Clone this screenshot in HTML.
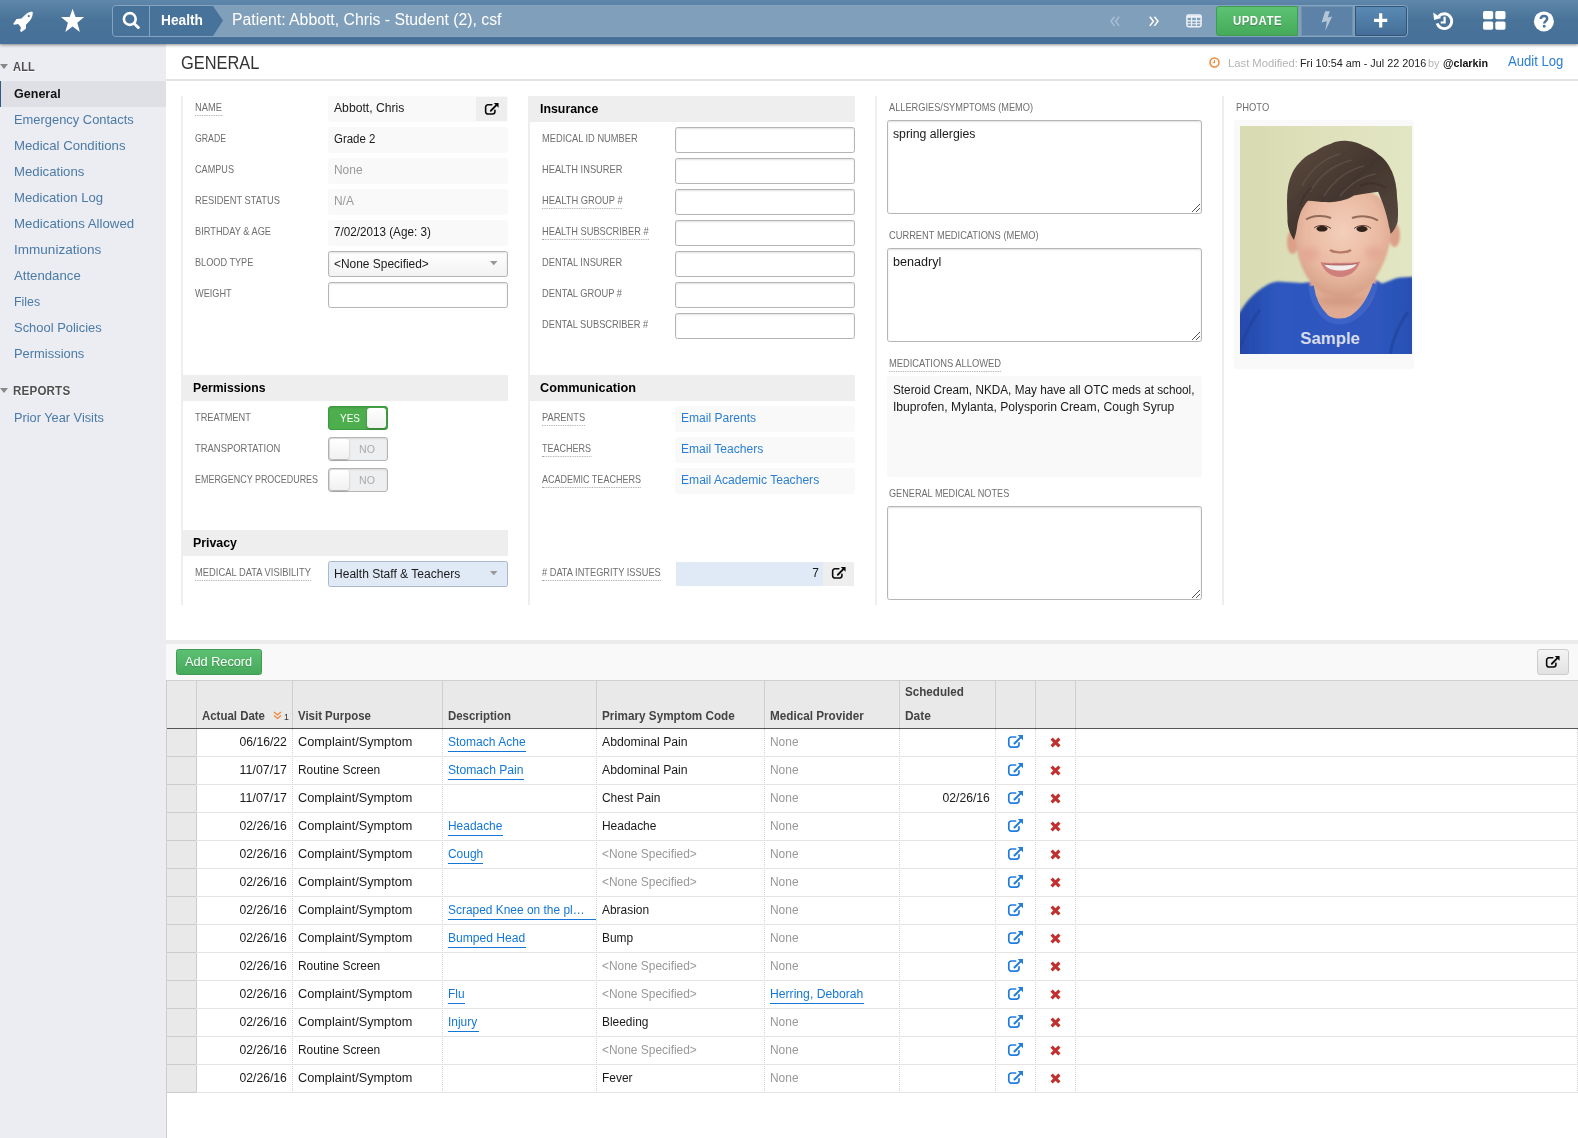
<!DOCTYPE html><html lang="en"><head><meta charset="utf-8"><title>Patient: Abbott, Chris</title><style>
*{box-sizing:border-box;margin:0;padding:0}
html,body{width:1578px;height:1138px;overflow:hidden;background:#fff}
body{position:relative;font-family:"Liberation Sans",sans-serif;color:#222;font-size:12.3px}
.a{position:absolute}
.t{position:absolute;white-space:nowrap;transform-origin:0 50%}
.t.r{transform-origin:100% 50%}
svg{position:absolute;overflow:visible}
#top{left:0;top:0;width:1578px;height:44px;background:linear-gradient(#5f87ab 0,#4a7399 45%,#47709a 100%);box-shadow:0 1px 3px rgba(0,0,0,.45);z-index:5}
#sbox{left:112px;top:5px;width:1296px;height:32px;border:1px solid #86a3bf;border-radius:4px;background:#809fbb;overflow:hidden}
#side{left:0;top:44px;width:166px;height:1094px;background:#ecedf3}
.sl{font-size:13.6px;color:#4a7aa5;line-height:20px;transform:scaleX(.95)}
.sh{font-size:12.2px;color:#505050;font-weight:bold;line-height:20px;transform:scaleX(.95);letter-spacing:.2px;text-shadow:0 1px 0 #fff}
.lbl{font-size:10.6px;color:#6f6f6f;line-height:14px;height:16px;transform:scaleX(.87)}
.lbl.u{border-bottom:1px dotted #a5a5a5}
.val{font-size:12.3px;color:#1a1a1a;line-height:20px;transform:scaleX(.97)}
.val.g{color:#999}
.val.k{color:#2a7fd4}
.box{position:absolute;background:#f9f9f9;border-radius:3px}
.inp{position:absolute;background:#fff;border:1px solid #b5b5b5;border-radius:2.500px;box-shadow:inset 0 1px 2px rgba(0,0,0,.12)}
.sec{position:absolute;background:#eee;height:26px}
.sect{font-size:13px;font-weight:bold;color:#000;line-height:20px;transform:scaleX(.95)}
.vl{position:absolute;width:2px;background:#eee;top:96px;height:508.700px}
.tog{position:absolute;width:60px;height:23.3px;border-radius:3px;border:1px solid #b4b4b4;background:#eeeff1;box-shadow:inset 0 1px 2px rgba(0,0,0,.1)}
.tog.on{background:#4cae4c;border-color:#3d9a3d}
.knob{position:absolute;top:.6px;width:19px;height:20px;margin:0 .6px;border-radius:3px;background:linear-gradient(#fff,#f1f1f1);box-shadow:0 1px 2px rgba(0,0,0,.3)}
.th{font-size:12.3px;font-weight:bold;color:#444;line-height:20px;transform:scaleX(.93)}
.td{font-size:12.3px;color:#1a1a1a;line-height:20px;transform:scaleX(.97)}
.td.g{color:#999}
.td.k{color:#1477d6}
.ul{position:absolute;height:1.3px;background:#1477d6}
.tb1{font-size:14px;font-weight:bold;color:#fff;line-height:20px;transform:scaleX(.92)}
.tb2{font-size:16px;color:#fff;line-height:20px;transform:scaleX(.93)}
.upd{font-size:12px;font-weight:bold;color:#fff;line-height:20px;letter-spacing:.5px;text-shadow:0 1px 1px rgba(0,0,0,.25)}
.h1{font-size:18.5px;color:#333;line-height:30px;transform:scaleX(.9)}
.lm{font-size:11.4px;line-height:20px;transform:scaleX(.95)}
.al{font-size:13.8px;color:#2a7fd4;line-height:20px;transform:scaleX(.95)}
.tg{font-size:11.8px;line-height:20px;transform:scaleX(.9)}
.ar{font-size:13.4px;color:#fff;line-height:20px;transform:scaleX(.95);text-shadow:0 1px 1px rgba(0,0,0,.2)}
.hl{position:absolute;left:167px;width:1411px;height:1px;background:#e4e4e4}
.cv{position:absolute;top:729px;width:0;height:364px;border-left:1px dotted #d4d4d4}
.hv{position:absolute;top:681px;width:1px;height:47px;background:#cfcfcf}
</style></head><body>
<div class="a" id="top">
<svg style="left:0;top:0" width="44" height="44" viewBox="0 0 44 44"><path d="M32.700 11.900C30.500 11.700 28.500 12.300 26.800 13.500C24.800 14.900 23.100 16.900 21.500 18.500L16.500 19L13.100 23.900L14.300 24.800L18.200 24L20.900 27.200L20.100 31L21.300 32L25.900 28.800L26.100 24.400C28 22.800 29.800 21 31 19C32.200 17 32.900 14.600 32.700 11.900z" fill="#fff"/><circle cx="28.800" cy="16.100" r="1.100" fill="#47729a"/></svg>
<svg style="left:0;top:0" width="100" height="44" viewBox="0 0 100 44"><path d="M72.600 8.700L75.500 17H84.200L77.300 22.700L79.900 32L72.600 26.400L65.300 32L67.900 22.700L61 17H69.700z" fill="#fff"/></svg>
<div class="a" id="sbox">
<div class="a" style="left:0;top:0;width:36px;height:30px;background:#47729a"></div>
<div class="a" style="left:36px;top:0;width:1px;height:30px;background:#86a3bf"></div>
<div class="a" style="left:37px;top:0;width:63px;height:30px;background:#47729a"></div>
<svg style="left:100px;top:0" width="11" height="30" viewBox="0 0 11 30"><path d="M0 0L10 14.500L0 30z" fill="#47729a"/></svg>
<svg style="left:0;top:0" width="36" height="30" viewBox="0 0 36 30"><circle cx="16.800" cy="13" r="5.900" fill="none" stroke="#fff" stroke-width="2.600"/><path d="M21.300 17.800l4.100 3.800" stroke="#fff" stroke-width="2.800" stroke-linecap="round"/></svg>
</div>
<span class="t tb1" style="left:160.5px;top:9.9px;;transform:scaleX(0.981)">Health</span>
<span class="t tb2" style="left:231.5px;top:10px;;transform:scaleX(0.987)">Patient: Abbott, Chris - Student (2), csf</span>
<svg style="left:1110px;top:16px" width="10" height="11" viewBox="0 0 10 11"><path d="M4.600 .7L1 5.300 4.600 9.900M9.200 .7L5.600 5.300 9.200 9.900" fill="none" stroke="#a9bfd3" stroke-width="1.500"/></svg>
<svg style="left:1149px;top:16px" width="10" height="11" viewBox="0 0 10 11"><path d="M.8 .7L4.400 5.300 .8 9.900M5.400 .7L9 5.300 5.400 9.900" fill="none" stroke="#fff" stroke-width="1.500"/></svg>
<svg style="left:1186px;top:13.500px" width="16" height="14" viewBox="0 0 16 14"><rect x=".9" y=".9" width="14.200" height="11.800" rx="1.600" fill="none" stroke="#eef2f6" stroke-width="1.500"/><path d="M1 1.500h14v2.300H1z" fill="#eef2f6"/><path d="M1 6.900h14M1 9.800h14M5.600 3v10M10.400 3v10" stroke="#eef2f6" stroke-width="1.100"/></svg>
<div class="a" style="left:1216px;top:6px;width:82px;height:30px;border-radius:3px 0 0 3px;background:linear-gradient(#5ec274,#45aa5a);border:1px solid #3f9a52"></div>
<span class="t upd" style="left:1232.5px;top:10.6px;;transform:scaleX(0.952)">UPDATE</span>
<div class="a" style="left:1301px;top:6px;width:52px;height:30px;background:#5c83a7;border:1px solid #7092b2"></div>
<svg style="left:1321px;top:11px" width="12" height="20" viewBox="0 0 12 20"><path d="M4.200 .3h4.600L6.700 6.600l4.500-1.100L4.300 19.700l1.500-9.400L.6 11.600z" fill="#b4c6d8"/></svg>
<div class="a" style="left:1355px;top:6px;width:52px;height:30px;border-radius:0 3px 3px 0;background:linear-gradient(#5a8ab4,#446e97);border:1px solid #31557a"></div>
<svg style="left:1373px;top:13px" width="15" height="15" viewBox="0 0 15 15"><path d="M7.700 .2v14.200M1 7.300h13.300" stroke="#fff" stroke-width="3.200"/></svg>
<svg style="left:1433px;top:11px" width="22" height="22" viewBox="0 0 22 22"><path d="M5.700 5.300A7.400 7.400 0 1 1 4.200 12.300" fill="none" stroke="#fff" stroke-width="2.900"/><path d="M.2 1.400l.9 7.700 7.100-2.200z" fill="#fff"/><path d="M11.600 5.800v5.700H7.700" fill="none" stroke="#fff" stroke-width="2.200"/></svg>
<svg style="left:1482.500px;top:11.300px" width="23" height="19" viewBox="0 0 23 19"><rect x="0" y="0" width="10.200" height="8.300" rx="1.700" fill="#fff"/><rect x="12.300" y="0" width="10.200" height="8.300" rx="1.700" fill="#fff"/><rect x="0" y="10.500" width="10.200" height="8.300" rx="1.700" fill="#fff"/><rect x="12.300" y="10.500" width="10.200" height="8.300" rx="1.700" fill="#fff"/></svg>
<svg style="left:1533px;top:11px" width="22" height="22" viewBox="0 0 22 22"><circle cx="10.900" cy="10.400" r="10" fill="#fff"/><path d="M7.700 8c.2-2 1.500-3.100 3.300-3.100 1.900 0 3.200 1.100 3.200 2.700 0 2.400-3 2.600-3 4.900" fill="none" stroke="#47729a" stroke-width="2.500"/><rect x="9.900" y="13.900" width="2.600" height="2.600" fill="#47729a"/></svg>
</div>
<div class="a" id="side"></div>
<div class="a" style="left:0;top:81px;width:166px;height:26px;background:#dfe0e6"></div>
<div class="a" style="left:0;top:81px;width:1px;height:26px;background:#2e5a88"></div>
<svg style="left:0;top:64px" width="8" height="5" viewBox="0 0 8 5"><path d="M0 0h8L4 5z" fill="#888"/></svg>
<span class="t sh" style="left:13px;top:56.5px;;transform:scaleX(0.905)">ALL</span>
<span class="t sl" style="left:14px;top:83.5px;color:#111;font-weight:bold;transform:scaleX(.9);transform:scaleX(0.922)">General</span>
<span class="t sl" style="left:14px;top:109.5px;;transform:scaleX(0.949)">Emergency Contacts</span>
<span class="t sl" style="left:14px;top:135.5px;;transform:scaleX(0.971)">Medical Conditions</span>
<span class="t sl" style="left:14px;top:161.5px;;transform:scaleX(0.970)">Medications</span>
<span class="t sl" style="left:14px;top:187.5px;;transform:scaleX(0.966)">Medication Log</span>
<span class="t sl" style="left:14px;top:213.5px;;transform:scaleX(0.976)">Medications Allowed</span>
<span class="t sl" style="left:14px;top:239.5px;;transform:scaleX(0.996)">Immunizations</span>
<span class="t sl" style="left:14px;top:265.5px;;transform:scaleX(0.970)">Attendance</span>
<span class="t sl" style="left:14px;top:291.5px;;transform:scaleX(0.909)">Files</span>
<span class="t sl" style="left:14px;top:317.5px;;transform:scaleX(0.952)">School Policies</span>
<span class="t sl" style="left:14px;top:343.5px;;transform:scaleX(0.950)">Permissions</span>
<svg style="left:0;top:388px" width="8" height="5" viewBox="0 0 8 5"><path d="M0 0h8L4 5z" fill="#888"/></svg>
<span class="t sh" style="left:13px;top:380.5px;">REPORTS</span>
<span class="t sl" style="left:14px;top:407.5px;;transform:scaleX(0.939)">Prior Year Visits</span>
<span class="t h1" style="left:181px;top:47.5px;;transform:scaleX(0.886)">GENERAL</span>
<div class="a" style="left:166px;top:79px;width:1412px;height:2px;background:#e2e2e2"></div>
<svg style="left:1209px;top:57px" width="11" height="11" viewBox="0 0 11 11"><circle cx="5.500" cy="5.500" r="4.500" fill="none" stroke="#f0883a" stroke-width="1.500"/><path d="M5.500 3v2.800H3.600" fill="none" stroke="#f0883a" stroke-width="1.100"/></svg>
<span class="t lm" style="left:1228px;top:53px;color:#b4b4b4;transform:scaleX(0.987)">Last Modified:</span>
<span class="t lm" style="left:1300px;top:53px;color:#222">Fri 10:54 am - Jul 22 2016</span>
<span class="t lm" style="left:1428px;top:53px;color:#b4b4b4">by</span>
<span class="t lm" style="left:1443px;top:53px;color:#111;font-weight:bold;transform:scaleX(.9);transform:scaleX(0.941)">@clarkin</span>
<span class="t al" style="left:1508px;top:52px;">Audit Log</span>
<div class="vl" style="left:181px"></div>
<div class="vl" style="left:528px"></div>
<div class="vl" style="left:875px"></div>
<div class="vl" style="left:1222px"></div>
<span class="t lbl u" style="left:195px;top:100px;;transform:scaleX(0.879)">NAME</span>
<div class="box" style="left:328px;top:96px;width:180px;height:26px"></div>
<span class="t val " style="left:334px;top:98.2px;;transform:scaleX(0.990)">Abbott, Chris</span>
<span class="t lbl" style="left:195px;top:131px;;transform:scaleX(0.825)">GRADE</span>
<div class="box" style="left:328px;top:127px;width:180px;height:26px"></div>
<span class="t val " style="left:334px;top:129.2px;;transform:scaleX(0.932)">Grade 2</span>
<span class="t lbl" style="left:195px;top:162px;;transform:scaleX(0.860)">CAMPUS</span>
<div class="box" style="left:328px;top:158px;width:180px;height:26px"></div>
<span class="t val g" style="left:334px;top:160.2px;">None</span>
<span class="t lbl" style="left:195px;top:193px;;transform:scaleX(0.880)">RESIDENT STATUS</span>
<div class="box" style="left:328px;top:189px;width:180px;height:26px"></div>
<span class="t val g" style="left:334px;top:191.2px;">N/A</span>
<span class="t lbl" style="left:195px;top:224px;;transform:scaleX(0.872)">BIRTHDAY &amp; AGE</span>
<div class="box" style="left:328px;top:220px;width:180px;height:26px"></div>
<span class="t val " style="left:334px;top:222.2px;;transform:scaleX(0.950)">7/02/2013 (Age: 3)</span>
<div class="a" style="left:476px;top:97px;width:31px;height:24px;background:#eee"></div>
<svg style="left:483.8px;top:103px" width="14.742" height="12.012" viewBox="0 0 16.2 13.2"><path d="M8.600 2H4.300A2.500 2.500 0 0 0 1.800 4.500V9.600A2.500 2.500 0 0 0 4.300 12.100H9.500A2.500 2.500 0 0 0 12 9.600V7.900" fill="none" stroke="#0a0a0a" stroke-width="1.75" stroke-linecap="round"/><path d="M7.500 8.500L13.600 2.400" fill="none" stroke="#0a0a0a" stroke-width="2.05" stroke-linecap="round"/><path d="M10.700 0H16V5.300z" fill="#0a0a0a"/></svg>
<span class="t lbl" style="left:195px;top:255px;;transform:scaleX(0.864)">BLOOD TYPE</span>
<div class="inp" style="left:328px;top:251px;width:180px;height:26px;background:linear-gradient(#fff,#f3f3f3)"></div>
<span class="t val" style="left:334px;top:254px;">&lt;None Specified&gt;</span>
<svg style="left:490px;top:261.300px" width="7.500" height="4.400" viewBox="0 0 9 5"><path d="M0 0h9L4.500 5z" fill="#999"/></svg>
<span class="t lbl" style="left:195px;top:286px;;transform:scaleX(0.866)">WEIGHT</span>
<div class="inp" style="left:328px;top:282px;width:180px;height:26px"></div>
<div class="sec" style="left:182px;top:375px;width:326px"></div>
<span class="t sect" style="left:193px;top:378px;;transform:scaleX(0.938)">Permissions</span>
<span class="t lbl" style="left:195px;top:410px;;transform:scaleX(0.873)">TREATMENT</span>
<div class="tog on" style="left:328px;top:406.3px"><div class="knob" style="right:0"></div></div>
<span class="t tg" style="left:339.5px;top:407.8px;color:#fff;transform:scaleX(0.847)">YES</span>
<span class="t lbl" style="left:195px;top:441px;;transform:scaleX(0.890)">TRANSPORTATION</span>
<div class="tog" style="left:328px;top:437.3px"><div class="knob" style="left:0"></div></div>
<span class="t tg" style="left:359.4px;top:439px;color:#aaa">NO</span>
<span class="t lbl" style="left:195px;top:472px;;transform:scaleX(0.844)">EMERGENCY PROCEDURES</span>
<div class="tog" style="left:328px;top:468.3px"><div class="knob" style="left:0"></div></div>
<span class="t tg" style="left:359.4px;top:470px;color:#aaa">NO</span>
<div class="sec" style="left:182px;top:530px;width:326px"></div>
<span class="t sect" style="left:193px;top:533px;">Privacy</span>
<span class="t lbl u" style="left:195px;top:565px;;transform:scaleX(0.884)">MEDICAL DATA VISIBILITY</span>
<div class="inp" style="left:328px;top:561px;width:180px;height:26px;background:#dfeaf6;border-color:#a9b9c9;box-shadow:none"></div>
<span class="t val" style="left:334px;top:564px;;transform:scaleX(0.980)">Health Staff &amp; Teachers</span>
<svg style="left:490px;top:571.300px" width="7.500" height="4.400" viewBox="0 0 9 5"><path d="M0 0h9L4.500 5z" fill="#999"/></svg>
<div class="sec" style="left:528px;top:96px;width:327px"></div>
<span class="t sect" style="left:540px;top:99px;">Insurance</span>
<span class="t lbl" style="left:542px;top:131px;;transform:scaleX(0.877)">MEDICAL ID NUMBER</span>
<div class="inp" style="left:675px;top:127px;width:180px;height:26px"></div>
<span class="t lbl" style="left:542px;top:162px;;transform:scaleX(0.878)">HEALTH INSURER</span>
<div class="inp" style="left:675px;top:158px;width:180px;height:26px"></div>
<span class="t lbl u" style="left:542px;top:193px;;transform:scaleX(0.882)">HEALTH GROUP #</span>
<div class="inp" style="left:675px;top:189px;width:180px;height:26px"></div>
<span class="t lbl u" style="left:542px;top:224px;;transform:scaleX(0.876)">HEALTH SUBSCRIBER #</span>
<div class="inp" style="left:675px;top:220px;width:180px;height:26px"></div>
<span class="t lbl" style="left:542px;top:255px;;transform:scaleX(0.880)">DENTAL INSURER</span>
<div class="inp" style="left:675px;top:251px;width:180px;height:26px"></div>
<span class="t lbl" style="left:542px;top:286px;;transform:scaleX(0.879)">DENTAL GROUP #</span>
<div class="inp" style="left:675px;top:282px;width:180px;height:26px"></div>
<span class="t lbl" style="left:542px;top:317px;;transform:scaleX(0.875)">DENTAL SUBSCRIBER #</span>
<div class="inp" style="left:675px;top:313px;width:180px;height:26px"></div>
<div class="sec" style="left:528px;top:375px;width:327px"></div>
<span class="t sect" style="left:540px;top:378px;;transform:scaleX(0.977)">Communication</span>
<span class="t lbl u" style="left:542px;top:410px;;transform:scaleX(0.875)">PARENTS</span>
<div class="box" style="left:675px;top:406px;width:180px;height:26px"></div>
<span class="t val k" style="left:681px;top:407.6px;;transform:scaleX(0.980)">Email Parents</span>
<span class="t lbl u" style="left:542px;top:441px;;transform:scaleX(0.851)">TEACHERS</span>
<div class="box" style="left:675px;top:437px;width:180px;height:26px"></div>
<span class="t val k" style="left:681px;top:438.6px;;transform:scaleX(0.982)">Email Teachers</span>
<span class="t lbl u" style="left:542px;top:472px;;transform:scaleX(0.850)">ACADEMIC TEACHERS</span>
<div class="box" style="left:675px;top:468px;width:180px;height:26px"></div>
<span class="t val k" style="left:681px;top:469.6px;;transform:scaleX(0.983)">Email Academic Teachers</span>
<span class="t lbl u" style="left:542px;top:565px;;transform:scaleX(0.873)"># DATA INTEGRITY ISSUES</span>
<div class="a" style="left:676px;top:562px;width:147px;height:24px;background:#dfeaf6"></div>
<div class="a" style="left:823px;top:562px;width:31px;height:24px;background:#eee"></div>
<span class="t r val" style="right:759px;top:562.6px;">7</span>
<svg style="left:831px;top:567.4px" width="14.742" height="12.012" viewBox="0 0 16.2 13.2"><path d="M8.600 2H4.300A2.500 2.500 0 0 0 1.800 4.500V9.600A2.500 2.500 0 0 0 4.300 12.100H9.500A2.500 2.500 0 0 0 12 9.600V7.900" fill="none" stroke="#0a0a0a" stroke-width="1.75" stroke-linecap="round"/><path d="M7.500 8.500L13.600 2.400" fill="none" stroke="#0a0a0a" stroke-width="2.05" stroke-linecap="round"/><path d="M10.700 0H16V5.300z" fill="#0a0a0a"/></svg>
<span class="t lbl" style="left:889px;top:100px;;transform:scaleX(0.872)">ALLERGIES/SYMPTOMS (MEMO)</span>
<div class="inp" style="left:887px;top:120px;width:315px;height:94px"></div>
<svg style="left:1192px;top:204px" width="8" height="8" viewBox="0 0 8 8"><path d="M0 8L8 0M4 8L8 4" stroke="#555" stroke-width="1"/></svg>
<span class="t val" style="left:893px;top:124px;;transform:scaleX(0.996)">spring allergies</span>
<span class="t lbl" style="left:889px;top:228px;;transform:scaleX(0.878)">CURRENT MEDICATIONS (MEMO)</span>
<div class="inp" style="left:887px;top:248px;width:315px;height:94px"></div>
<svg style="left:1192px;top:332px" width="8" height="8" viewBox="0 0 8 8"><path d="M0 8L8 0M4 8L8 4" stroke="#555" stroke-width="1"/></svg>
<span class="t val" style="left:893px;top:252px;;transform:scaleX(1.022)">benadryl</span>
<span class="t lbl u" style="left:889px;top:356px;;transform:scaleX(0.882)">MEDICATIONS ALLOWED</span>
<div class="box" style="left:887px;top:376px;width:315px;height:101px"></div>
<span class="t val" style="left:893px;top:380px;;transform:scaleX(0.957)">Steroid Cream, NKDA, May have all OTC meds at school,</span>
<span class="t val" style="left:893px;top:397px;;transform:scaleX(0.987)">Ibuprofen, Mylanta, Polysporin Cream, Cough Syrup</span>
<span class="t lbl" style="left:889px;top:486px;;transform:scaleX(0.863)">GENERAL MEDICAL NOTES</span>
<div class="inp" style="left:887px;top:506px;width:315px;height:94px"></div>
<svg style="left:1192px;top:590px" width="8" height="8" viewBox="0 0 8 8"><path d="M0 8L8 0M4 8L8 4" stroke="#555" stroke-width="1"/></svg>
<span class="t lbl" style="left:1236px;top:100px;;transform:scaleX(0.886)">PHOTO</span>
<div class="box" style="left:1234px;top:120px;width:180px;height:249px"></div>
<svg style="left:1240px;top:126px;overflow:hidden" width="172" height="228" viewBox="0 0 172 228">
<defs><filter id="b1" x="-20%" y="-20%" width="140%" height="140%"><feGaussianBlur stdDeviation="1.1"/></filter><filter id="b2" x="-20%" y="-20%" width="140%" height="140%"><feGaussianBlur stdDeviation="0.6"/></filter><filter id="b3" x="-30%" y="-30%" width="160%" height="160%"><feGaussianBlur stdDeviation="3"/></filter>
<linearGradient id="bg" x1="0" y1="0" x2="1" y2="0"><stop offset="0" stop-color="#d8dbb1"/><stop offset="1" stop-color="#e3e6c3"/></linearGradient>
<radialGradient id="sk" cx=".5" cy=".4" r=".65"><stop offset="0" stop-color="#f4cfba"/><stop offset=".6" stop-color="#e9b9a1"/><stop offset="1" stop-color="#d29a82"/></radialGradient>
<linearGradient id="hr" x1="0" y1="0" x2="1" y2="1"><stop offset="0" stop-color="#5d4c40"/><stop offset=".5" stop-color="#43362f"/><stop offset="1" stop-color="#594a40"/></linearGradient>
<linearGradient id="sh" x1="0" y1="0" x2="1" y2="0"><stop offset="0" stop-color="#2348a8"/><stop offset=".25" stop-color="#2f58c0"/><stop offset=".8" stop-color="#2d56bd"/><stop offset="1" stop-color="#2a4fb2"/></linearGradient></defs>
<rect width="172" height="228" fill="url(#bg)"/>
<g filter="url(#b1)">
<path d="M-4 194C1 182 10 170 22 162C28 158 32 156 38 155.500L62 157L70 156L100 172L136 154L142 157.500C148 156 154 152 160 151.500L176 150.500V232H-4z" fill="url(#sh)"/>
<path d="M70 150L136 148C136 162 133 172 126 181C119 190 110 196 99 196.500C90 196 82 190 77 181C72 172 70 163 70 150z" fill="#e0ab92"/>
<ellipse cx="52.500" cy="116" rx="5.500" ry="12" fill="#dda088"/><ellipse cx="154.500" cy="109" rx="5.500" ry="12" fill="#dda088"/>
<path d="M55 96C55 72 75 62 103 62S151 72 151 96C152 112 148 128 142 140C137 151 130 160 122 165C112 172 92 172 82 166C72 160 64 148 60 136C56 124 55 110 55 96z" fill="url(#sk)"/>
</g>
<g filter="url(#b3)"><ellipse cx="70" cy="128" rx="9" ry="7" fill="#e29c8c" opacity=".55"/><ellipse cx="134" cy="127" rx="9" ry="7" fill="#e29c8c" opacity=".55"/><ellipse cx="101" cy="175" rx="24" ry="5" fill="#c98e78" opacity=".6"/></g>
<g filter="url(#b2)">
<path d="M54 114C50 108 47 100 47.500 92C47 80 46.500 70 48 61C50 50 54 42 59.500 36.700C64 31 70 28 76 25C81 21 86 19 91 17.700C96 15 102 14.500 107.600 15C113 15.500 119 17 124 20C130 22 135 25 139 29C145 33 149 39 152 45.600C155 53 157 62 157 71C158 80 158.500 88 157.600 96C156 101 154 105 150.600 108C150 104 149.600 102 149 101C148 94 146 87 144 81C142 75 140 70 138 65.800C130 67 122 68 114 69.600C110 72 106 74 101 74.700C96 76 91 76.500 86 76C80 76 74 75 68 74.700C65 78 62.500 82 60.800 86C59 91 57.600 96 57 101C56.500 106 55 110 54 114z" fill="url(#hr)"/>
<path d="M62 60C70 44 84 32 100 28M70 66C80 48 96 38 112 34M84 70C94 54 108 44 124 40M100 70C110 58 122 50 136 48" stroke="#6b594b" stroke-width="1.500" fill="none" opacity=".6"/>
<path d="M120 60C128 56 136 56 146 62M60 80C62 72 66 66 72 62" stroke="#3a2e28" stroke-width="2" fill="none" opacity=".6"/>
<path d="M71 160C73 174 78 184 86 191C92 196 104 197 112 192C122 186 130 174 135.500 158" stroke="#3a63c8" stroke-width="5.500" fill="none"/>
<path d="M-2 226C4 210 10 196 20 184M150 228C154 210 160 196 168 186" stroke="#1f3f9a" stroke-width="3" fill="none" opacity=".6"/>
<ellipse cx="82" cy="102.700" rx="5.600" ry="2.900" fill="#33221b"/><ellipse cx="122" cy="103" rx="5.600" ry="2.900" fill="#33221b"/>
<path d="M74 102C78 98.500 86 98.500 91 102.500M114 102.500C119 98.500 127 98.500 131 102.500" stroke="#5a3d31" stroke-width="1" fill="none"/>
<path d="M66 93.500C73 89 84 89 91 92M112 92C120 89 131 90 138 94.500" stroke="#7a5545" stroke-width="2" fill="none" opacity=".8"/>
<path d="M90 124C94 127 98 125.500 100.500 126.500C103 125.500 107 127 111 124" stroke="#b47a66" stroke-width="2.200" fill="none"/>
<path d="M80.500 136C88 137.500 95 136.500 100 137C105 136.500 113 137.500 120 135.500C117 146 108 151 100 151C92 151 84 146 80.500 136z" fill="#cf7f7c"/>
<path d="M84 138C92 139.500 108 139.500 117 137.500C114 143 106 144.500 100 144.500C94 144.500 87 143 84 138z" fill="#f3ecea"/>
<path d="M84 138C92 139.500 108 139.500 117 137.500" stroke="#8a4a48" stroke-width="1" fill="none" opacity=".7"/>
</g>
<text x="60.300" y="217.500" textLength="59.600" lengthAdjust="spacingAndGlyphs" font-family="Liberation Sans, sans-serif" font-weight="bold" font-size="16.500" fill="#d6dcea">Sample</text>
</svg>
<div class="a" style="left:166px;top:640px;width:1412px;height:4px;background:#ebebeb"></div>
<div class="a" style="left:166px;top:643.700px;width:1412px;height:37px;background:#f9f9f9"></div>
<div class="a" style="left:176px;top:649px;width:86px;height:26px;border-radius:2.500px;background:linear-gradient(#5cc073,#46a95b);border:1px solid #3f9a52"></div>
<span class="t ar" style="left:185px;top:651.5px;">Add Record</span>
<div class="a" style="left:1537px;top:649px;width:32px;height:26px;border-radius:3px;background:linear-gradient(#f4f4f4,#e2e2e2);border:1px solid #ccc"></div>
<svg style="left:1545.2px;top:655.5px" width="14.742" height="12.012" viewBox="0 0 16.2 13.2"><path d="M8.600 2H4.300A2.500 2.500 0 0 0 1.800 4.500V9.600A2.500 2.500 0 0 0 4.300 12.100H9.500A2.500 2.500 0 0 0 12 9.600V7.900" fill="none" stroke="#0a0a0a" stroke-width="1.75" stroke-linecap="round"/><path d="M7.500 8.500L13.600 2.400" fill="none" stroke="#0a0a0a" stroke-width="2.05" stroke-linecap="round"/><path d="M10.700 0H16V5.300z" fill="#0a0a0a"/></svg>
<div class="a" style="left:166px;top:680px;width:1412px;height:48px;background:#e9e9e9;border-top:1px solid #d0d0d0"></div>
<div class="a" style="left:166px;top:728px;width:1412px;height:1px;background:#555"></div>
<div class="a" style="left:166px;top:680px;width:1px;height:458px;background:#ccc"></div>
<div class="a" style="left:167px;top:729px;width:29px;height:364px;background:#e9e9e9"></div>
<div class="a" style="left:196px;top:729px;width:1px;height:364px;background:#ccc"></div>
<div class="hv" style="left:196px"></div>
<div class="hv" style="left:292px"></div>
<div class="hv" style="left:442px"></div>
<div class="hv" style="left:596px"></div>
<div class="hv" style="left:764px"></div>
<div class="hv" style="left:899px"></div>
<div class="hv" style="left:995px"></div>
<div class="hv" style="left:1035px"></div>
<div class="hv" style="left:1075px"></div>
<div class="cv" style="left:292px"></div>
<div class="cv" style="left:442px"></div>
<div class="cv" style="left:596px"></div>
<div class="cv" style="left:764px"></div>
<div class="cv" style="left:899px"></div>
<div class="cv" style="left:995px"></div>
<div class="cv" style="left:1035px"></div>
<div class="cv" style="left:1075px"></div>
<div class="cv" style="left:1577px"></div>
<div class="hl" style="top:756px"></div>
<div class="a" style="left:167px;top:756px;width:29px;height:1px;background:#ccc"></div>
<div class="hl" style="top:784px"></div>
<div class="a" style="left:167px;top:784px;width:29px;height:1px;background:#ccc"></div>
<div class="hl" style="top:812px"></div>
<div class="a" style="left:167px;top:812px;width:29px;height:1px;background:#ccc"></div>
<div class="hl" style="top:840px"></div>
<div class="a" style="left:167px;top:840px;width:29px;height:1px;background:#ccc"></div>
<div class="hl" style="top:868px"></div>
<div class="a" style="left:167px;top:868px;width:29px;height:1px;background:#ccc"></div>
<div class="hl" style="top:896px"></div>
<div class="a" style="left:167px;top:896px;width:29px;height:1px;background:#ccc"></div>
<div class="hl" style="top:924px"></div>
<div class="a" style="left:167px;top:924px;width:29px;height:1px;background:#ccc"></div>
<div class="hl" style="top:952px"></div>
<div class="a" style="left:167px;top:952px;width:29px;height:1px;background:#ccc"></div>
<div class="hl" style="top:980px"></div>
<div class="a" style="left:167px;top:980px;width:29px;height:1px;background:#ccc"></div>
<div class="hl" style="top:1008px"></div>
<div class="a" style="left:167px;top:1008px;width:29px;height:1px;background:#ccc"></div>
<div class="hl" style="top:1036px"></div>
<div class="a" style="left:167px;top:1036px;width:29px;height:1px;background:#ccc"></div>
<div class="hl" style="top:1064px"></div>
<div class="a" style="left:167px;top:1064px;width:29px;height:1px;background:#ccc"></div>
<div class="hl" style="top:1092px"></div>
<div class="a" style="left:167px;top:1092px;width:29px;height:1px;background:#ccc"></div>
<span class="t th" style="left:202px;top:705.5px;">Actual Date</span>
<svg style="left:273px;top:711px" width="9" height="9" viewBox="0 0 9 9"><path d="M1 1l3.500 3L8 1M1 4.500l3.500 3L8 4.500" fill="none" stroke="#f0883a" stroke-width="1.300"/></svg>
<span class="t th" style="left:283.5px;top:707px;font-size:9.5px;font-weight:normal;color:#333">1</span>
<span class="t th" style="left:298px;top:705.5px;">Visit Purpose</span>
<span class="t th" style="left:448px;top:705.5px;">Description</span>
<span class="t th" style="left:602px;top:705.5px;;transform:scaleX(0.952)">Primary Symptom Code</span>
<span class="t th" style="left:770px;top:705.5px;;transform:scaleX(0.953)">Medical Provider</span>
<span class="t th" style="left:905px;top:681.5px;;transform:scaleX(0.946)">Scheduled</span>
<span class="t th" style="left:905px;top:705.5px;;transform:scaleX(0.968)">Date</span>
<span class="t r td" style="right:1291px;top:732px;;transform:scaleX(0.990)">06/16/22</span>
<span class="t td" style="left:298px;top:732px;;transform:scaleX(1.033)">Complaint/Symptom</span>
<span class="t td k" style="left:448px;top:732px;;transform:scaleX(0.979)">Stomach Ache</span>
<div class="ul" style="left:448px;top:750.8px;width:78px"></div>
<span class="t td" style="left:602px;top:732px;;transform:scaleX(0.994)">Abdominal Pain</span>
<span class="t td g" style="left:770px;top:732px;">None</span>
<svg style="left:1007px;top:735px" width="16.2" height="13.2" viewBox="0 0 16.2 13.2"><path d="M8.600 2H4.300A2.500 2.500 0 0 0 1.800 4.500V9.600A2.500 2.500 0 0 0 4.300 12.100H9.500A2.500 2.500 0 0 0 12 9.600V7.900" fill="none" stroke="#1f7ddb" stroke-width="1.7" stroke-linecap="round"/><path d="M7.500 8.500L13.600 2.400" fill="none" stroke="#1f7ddb" stroke-width="2" stroke-linecap="round"/><path d="M10.700 0H16V5.300z" fill="#1f7ddb"/></svg>
<svg style="left:1049.700px;top:736.7px" width="11" height="11" viewBox="0 0 11 11"><path d="M1.600 1.600l7.800 7.800M9.400 1.600l-7.800 7.800" stroke="#c2302d" stroke-width="3.100" stroke-linecap="butt"/></svg>
<span class="t r td" style="right:1291px;top:760px;;transform:scaleX(1.009)">11/07/17</span>
<span class="t td" style="left:298px;top:760px;">Routine Screen</span>
<span class="t td k" style="left:448px;top:760px;;transform:scaleX(0.987)">Stomach Pain</span>
<div class="ul" style="left:448px;top:778.8px;width:76px"></div>
<span class="t td" style="left:602px;top:760px;;transform:scaleX(0.994)">Abdominal Pain</span>
<span class="t td g" style="left:770px;top:760px;">None</span>
<svg style="left:1007px;top:763px" width="16.2" height="13.2" viewBox="0 0 16.2 13.2"><path d="M8.600 2H4.300A2.500 2.500 0 0 0 1.800 4.500V9.600A2.500 2.500 0 0 0 4.300 12.100H9.500A2.500 2.500 0 0 0 12 9.600V7.900" fill="none" stroke="#1f7ddb" stroke-width="1.7" stroke-linecap="round"/><path d="M7.500 8.500L13.600 2.400" fill="none" stroke="#1f7ddb" stroke-width="2" stroke-linecap="round"/><path d="M10.700 0H16V5.300z" fill="#1f7ddb"/></svg>
<svg style="left:1049.700px;top:764.7px" width="11" height="11" viewBox="0 0 11 11"><path d="M1.600 1.600l7.800 7.800M9.400 1.600l-7.800 7.800" stroke="#c2302d" stroke-width="3.100" stroke-linecap="butt"/></svg>
<span class="t r td" style="right:1291px;top:788px;;transform:scaleX(1.009)">11/07/17</span>
<span class="t td" style="left:298px;top:788px;;transform:scaleX(1.033)">Complaint/Symptom</span>
<span class="t td" style="left:602px;top:788px;">Chest Pain</span>
<span class="t td g" style="left:770px;top:788px;">None</span>
<span class="t r td" style="right:588px;top:788px;;transform:scaleX(0.990)">02/26/16</span>
<svg style="left:1007px;top:791px" width="16.2" height="13.2" viewBox="0 0 16.2 13.2"><path d="M8.600 2H4.300A2.500 2.500 0 0 0 1.800 4.500V9.600A2.500 2.500 0 0 0 4.300 12.100H9.500A2.500 2.500 0 0 0 12 9.600V7.900" fill="none" stroke="#1f7ddb" stroke-width="1.7" stroke-linecap="round"/><path d="M7.500 8.500L13.600 2.400" fill="none" stroke="#1f7ddb" stroke-width="2" stroke-linecap="round"/><path d="M10.700 0H16V5.300z" fill="#1f7ddb"/></svg>
<svg style="left:1049.700px;top:792.7px" width="11" height="11" viewBox="0 0 11 11"><path d="M1.600 1.600l7.800 7.800M9.400 1.600l-7.800 7.800" stroke="#c2302d" stroke-width="3.100" stroke-linecap="butt"/></svg>
<span class="t r td" style="right:1291px;top:816px;;transform:scaleX(0.990)">02/26/16</span>
<span class="t td" style="left:298px;top:816px;;transform:scaleX(1.033)">Complaint/Symptom</span>
<span class="t td k" style="left:448px;top:816px;">Headache</span>
<div class="ul" style="left:448px;top:834.8px;width:55px"></div>
<span class="t td" style="left:602px;top:816px;">Headache</span>
<span class="t td g" style="left:770px;top:816px;">None</span>
<svg style="left:1007px;top:819px" width="16.2" height="13.2" viewBox="0 0 16.2 13.2"><path d="M8.600 2H4.300A2.500 2.500 0 0 0 1.800 4.500V9.600A2.500 2.500 0 0 0 4.300 12.100H9.500A2.500 2.500 0 0 0 12 9.600V7.900" fill="none" stroke="#1f7ddb" stroke-width="1.7" stroke-linecap="round"/><path d="M7.500 8.500L13.600 2.400" fill="none" stroke="#1f7ddb" stroke-width="2" stroke-linecap="round"/><path d="M10.700 0H16V5.300z" fill="#1f7ddb"/></svg>
<svg style="left:1049.700px;top:820.7px" width="11" height="11" viewBox="0 0 11 11"><path d="M1.600 1.600l7.800 7.800M9.400 1.600l-7.800 7.800" stroke="#c2302d" stroke-width="3.100" stroke-linecap="butt"/></svg>
<span class="t r td" style="right:1291px;top:844px;;transform:scaleX(0.990)">02/26/16</span>
<span class="t td" style="left:298px;top:844px;;transform:scaleX(1.033)">Complaint/Symptom</span>
<span class="t td k" style="left:448px;top:844px;">Cough</span>
<div class="ul" style="left:448px;top:862.8px;width:35px"></div>
<span class="t td g" style="left:602px;top:844px;">&lt;None Specified&gt;</span>
<span class="t td g" style="left:770px;top:844px;">None</span>
<svg style="left:1007px;top:847px" width="16.2" height="13.2" viewBox="0 0 16.2 13.2"><path d="M8.600 2H4.300A2.500 2.500 0 0 0 1.800 4.500V9.600A2.500 2.500 0 0 0 4.300 12.100H9.500A2.500 2.500 0 0 0 12 9.600V7.900" fill="none" stroke="#1f7ddb" stroke-width="1.7" stroke-linecap="round"/><path d="M7.500 8.500L13.600 2.400" fill="none" stroke="#1f7ddb" stroke-width="2" stroke-linecap="round"/><path d="M10.700 0H16V5.300z" fill="#1f7ddb"/></svg>
<svg style="left:1049.700px;top:848.7px" width="11" height="11" viewBox="0 0 11 11"><path d="M1.600 1.600l7.800 7.800M9.400 1.600l-7.800 7.800" stroke="#c2302d" stroke-width="3.100" stroke-linecap="butt"/></svg>
<span class="t r td" style="right:1291px;top:872px;;transform:scaleX(0.990)">02/26/16</span>
<span class="t td" style="left:298px;top:872px;;transform:scaleX(1.033)">Complaint/Symptom</span>
<span class="t td g" style="left:602px;top:872px;">&lt;None Specified&gt;</span>
<span class="t td g" style="left:770px;top:872px;">None</span>
<svg style="left:1007px;top:875px" width="16.2" height="13.2" viewBox="0 0 16.2 13.2"><path d="M8.600 2H4.300A2.500 2.500 0 0 0 1.800 4.500V9.600A2.500 2.500 0 0 0 4.300 12.100H9.500A2.500 2.500 0 0 0 12 9.600V7.900" fill="none" stroke="#1f7ddb" stroke-width="1.7" stroke-linecap="round"/><path d="M7.500 8.500L13.600 2.400" fill="none" stroke="#1f7ddb" stroke-width="2" stroke-linecap="round"/><path d="M10.700 0H16V5.300z" fill="#1f7ddb"/></svg>
<svg style="left:1049.700px;top:876.7px" width="11" height="11" viewBox="0 0 11 11"><path d="M1.600 1.600l7.800 7.800M9.400 1.600l-7.800 7.800" stroke="#c2302d" stroke-width="3.100" stroke-linecap="butt"/></svg>
<span class="t r td" style="right:1291px;top:900px;;transform:scaleX(0.990)">02/26/16</span>
<span class="t td" style="left:298px;top:900px;;transform:scaleX(1.033)">Complaint/Symptom</span>
<span class="t td k" style="left:448px;top:900px;">Scraped Knee on the pl…</span>
<div class="ul" style="left:448px;top:918.8px;width:148px"></div>
<span class="t td" style="left:602px;top:900px;">Abrasion</span>
<span class="t td g" style="left:770px;top:900px;">None</span>
<svg style="left:1007px;top:903px" width="16.2" height="13.2" viewBox="0 0 16.2 13.2"><path d="M8.600 2H4.300A2.500 2.500 0 0 0 1.800 4.500V9.600A2.500 2.500 0 0 0 4.300 12.100H9.500A2.500 2.500 0 0 0 12 9.600V7.900" fill="none" stroke="#1f7ddb" stroke-width="1.7" stroke-linecap="round"/><path d="M7.500 8.500L13.600 2.400" fill="none" stroke="#1f7ddb" stroke-width="2" stroke-linecap="round"/><path d="M10.700 0H16V5.300z" fill="#1f7ddb"/></svg>
<svg style="left:1049.700px;top:904.7px" width="11" height="11" viewBox="0 0 11 11"><path d="M1.600 1.600l7.800 7.800M9.400 1.600l-7.800 7.800" stroke="#c2302d" stroke-width="3.100" stroke-linecap="butt"/></svg>
<span class="t r td" style="right:1291px;top:928px;;transform:scaleX(0.990)">02/26/16</span>
<span class="t td" style="left:298px;top:928px;;transform:scaleX(1.033)">Complaint/Symptom</span>
<span class="t td k" style="left:448px;top:928px;;transform:scaleX(0.982)">Bumped Head</span>
<div class="ul" style="left:448px;top:946.8px;width:78px"></div>
<span class="t td" style="left:602px;top:928px;">Bump</span>
<span class="t td g" style="left:770px;top:928px;">None</span>
<svg style="left:1007px;top:931px" width="16.2" height="13.2" viewBox="0 0 16.2 13.2"><path d="M8.600 2H4.300A2.500 2.500 0 0 0 1.800 4.500V9.600A2.500 2.500 0 0 0 4.300 12.100H9.500A2.500 2.500 0 0 0 12 9.600V7.900" fill="none" stroke="#1f7ddb" stroke-width="1.7" stroke-linecap="round"/><path d="M7.500 8.500L13.600 2.400" fill="none" stroke="#1f7ddb" stroke-width="2" stroke-linecap="round"/><path d="M10.700 0H16V5.300z" fill="#1f7ddb"/></svg>
<svg style="left:1049.700px;top:932.7px" width="11" height="11" viewBox="0 0 11 11"><path d="M1.600 1.600l7.800 7.800M9.400 1.600l-7.800 7.800" stroke="#c2302d" stroke-width="3.100" stroke-linecap="butt"/></svg>
<span class="t r td" style="right:1291px;top:956px;;transform:scaleX(0.990)">02/26/16</span>
<span class="t td" style="left:298px;top:956px;">Routine Screen</span>
<span class="t td g" style="left:602px;top:956px;">&lt;None Specified&gt;</span>
<span class="t td g" style="left:770px;top:956px;">None</span>
<svg style="left:1007px;top:959px" width="16.2" height="13.2" viewBox="0 0 16.2 13.2"><path d="M8.600 2H4.300A2.500 2.500 0 0 0 1.800 4.500V9.600A2.500 2.500 0 0 0 4.300 12.100H9.500A2.500 2.500 0 0 0 12 9.600V7.900" fill="none" stroke="#1f7ddb" stroke-width="1.7" stroke-linecap="round"/><path d="M7.500 8.500L13.600 2.400" fill="none" stroke="#1f7ddb" stroke-width="2" stroke-linecap="round"/><path d="M10.700 0H16V5.300z" fill="#1f7ddb"/></svg>
<svg style="left:1049.700px;top:960.7px" width="11" height="11" viewBox="0 0 11 11"><path d="M1.600 1.600l7.800 7.800M9.400 1.600l-7.800 7.800" stroke="#c2302d" stroke-width="3.100" stroke-linecap="butt"/></svg>
<span class="t r td" style="right:1291px;top:984px;;transform:scaleX(0.990)">02/26/16</span>
<span class="t td" style="left:298px;top:984px;;transform:scaleX(1.033)">Complaint/Symptom</span>
<span class="t td k" style="left:448px;top:984px;">Flu</span>
<div class="ul" style="left:448px;top:1002.8px;width:17px"></div>
<span class="t td g" style="left:602px;top:984px;">&lt;None Specified&gt;</span>
<span class="t td k" style="left:770px;top:984px;;transform:scaleX(0.989)">Herring, Deborah</span>
<div class="ul" style="left:770px;top:1002.8px;width:94px"></div>
<svg style="left:1007px;top:987px" width="16.2" height="13.2" viewBox="0 0 16.2 13.2"><path d="M8.600 2H4.300A2.500 2.500 0 0 0 1.800 4.500V9.600A2.500 2.500 0 0 0 4.300 12.100H9.500A2.500 2.500 0 0 0 12 9.600V7.900" fill="none" stroke="#1f7ddb" stroke-width="1.7" stroke-linecap="round"/><path d="M7.500 8.500L13.600 2.400" fill="none" stroke="#1f7ddb" stroke-width="2" stroke-linecap="round"/><path d="M10.700 0H16V5.300z" fill="#1f7ddb"/></svg>
<svg style="left:1049.700px;top:988.7px" width="11" height="11" viewBox="0 0 11 11"><path d="M1.600 1.600l7.800 7.800M9.400 1.600l-7.800 7.800" stroke="#c2302d" stroke-width="3.100" stroke-linecap="butt"/></svg>
<span class="t r td" style="right:1291px;top:1012px;;transform:scaleX(0.990)">02/26/16</span>
<span class="t td" style="left:298px;top:1012px;;transform:scaleX(1.033)">Complaint/Symptom</span>
<span class="t td k" style="left:448px;top:1012px;">Injury</span>
<div class="ul" style="left:448px;top:1030.8px;width:31px"></div>
<span class="t td" style="left:602px;top:1012px;">Bleeding</span>
<span class="t td g" style="left:770px;top:1012px;">None</span>
<svg style="left:1007px;top:1015px" width="16.2" height="13.2" viewBox="0 0 16.2 13.2"><path d="M8.600 2H4.300A2.500 2.500 0 0 0 1.800 4.500V9.600A2.500 2.500 0 0 0 4.300 12.100H9.500A2.500 2.500 0 0 0 12 9.600V7.900" fill="none" stroke="#1f7ddb" stroke-width="1.7" stroke-linecap="round"/><path d="M7.500 8.500L13.600 2.400" fill="none" stroke="#1f7ddb" stroke-width="2" stroke-linecap="round"/><path d="M10.700 0H16V5.300z" fill="#1f7ddb"/></svg>
<svg style="left:1049.700px;top:1016.7px" width="11" height="11" viewBox="0 0 11 11"><path d="M1.600 1.600l7.800 7.800M9.400 1.600l-7.800 7.800" stroke="#c2302d" stroke-width="3.100" stroke-linecap="butt"/></svg>
<span class="t r td" style="right:1291px;top:1040px;;transform:scaleX(0.990)">02/26/16</span>
<span class="t td" style="left:298px;top:1040px;">Routine Screen</span>
<span class="t td g" style="left:602px;top:1040px;">&lt;None Specified&gt;</span>
<span class="t td g" style="left:770px;top:1040px;">None</span>
<svg style="left:1007px;top:1043px" width="16.2" height="13.2" viewBox="0 0 16.2 13.2"><path d="M8.600 2H4.300A2.500 2.500 0 0 0 1.800 4.500V9.600A2.500 2.500 0 0 0 4.300 12.100H9.500A2.500 2.500 0 0 0 12 9.600V7.900" fill="none" stroke="#1f7ddb" stroke-width="1.7" stroke-linecap="round"/><path d="M7.500 8.500L13.600 2.400" fill="none" stroke="#1f7ddb" stroke-width="2" stroke-linecap="round"/><path d="M10.700 0H16V5.300z" fill="#1f7ddb"/></svg>
<svg style="left:1049.700px;top:1044.7px" width="11" height="11" viewBox="0 0 11 11"><path d="M1.600 1.600l7.800 7.800M9.400 1.600l-7.800 7.800" stroke="#c2302d" stroke-width="3.100" stroke-linecap="butt"/></svg>
<span class="t r td" style="right:1291px;top:1068px;;transform:scaleX(0.990)">02/26/16</span>
<span class="t td" style="left:298px;top:1068px;;transform:scaleX(1.033)">Complaint/Symptom</span>
<span class="t td" style="left:602px;top:1068px;">Fever</span>
<span class="t td g" style="left:770px;top:1068px;">None</span>
<svg style="left:1007px;top:1071px" width="16.2" height="13.2" viewBox="0 0 16.2 13.2"><path d="M8.600 2H4.300A2.500 2.500 0 0 0 1.800 4.500V9.600A2.500 2.500 0 0 0 4.300 12.100H9.500A2.500 2.500 0 0 0 12 9.600V7.900" fill="none" stroke="#1f7ddb" stroke-width="1.7" stroke-linecap="round"/><path d="M7.500 8.500L13.600 2.400" fill="none" stroke="#1f7ddb" stroke-width="2" stroke-linecap="round"/><path d="M10.700 0H16V5.300z" fill="#1f7ddb"/></svg>
<svg style="left:1049.700px;top:1072.7px" width="11" height="11" viewBox="0 0 11 11"><path d="M1.600 1.600l7.800 7.800M9.400 1.600l-7.800 7.800" stroke="#c2302d" stroke-width="3.100" stroke-linecap="butt"/></svg>
</body></html>
